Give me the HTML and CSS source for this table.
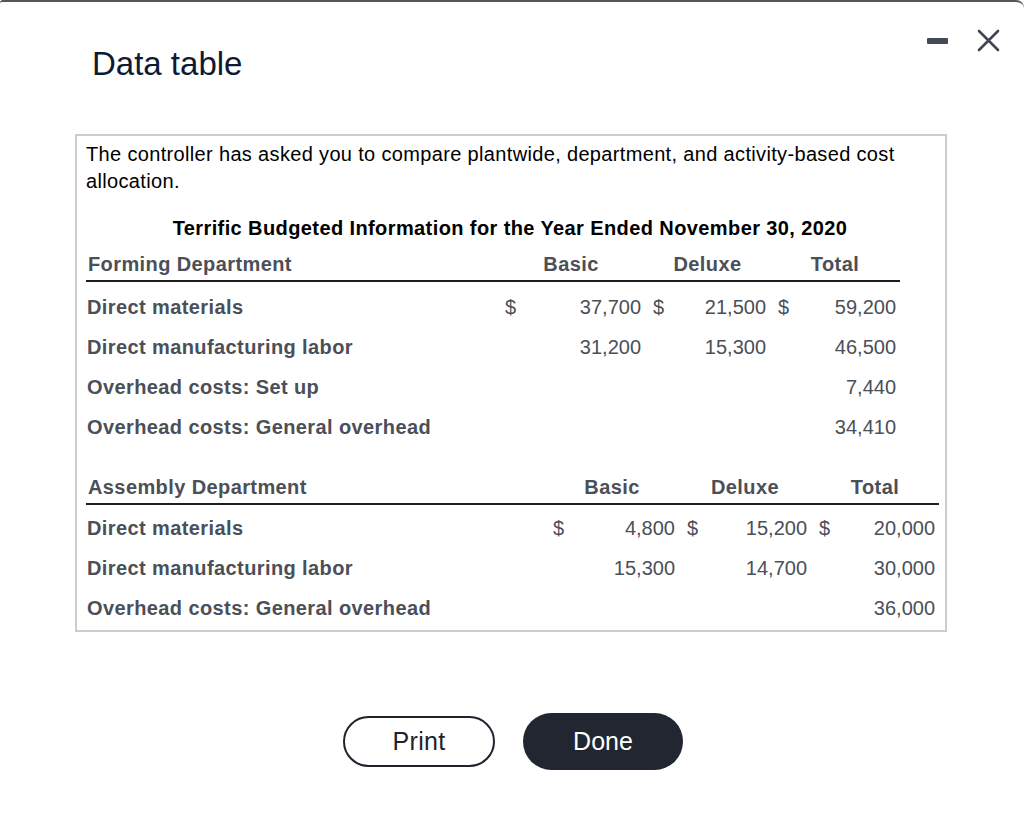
FILE: index.html
```html
<!DOCTYPE html>
<html lang="en">
<head>
<meta charset="utf-8">
<title>Data table</title>
<link rel="stylesheet" href="styles.css">
</head>
<body>
<div class="dialog">
  <header class="dialog-header">
    <h1 class="dialog-title">Data table</h1>
    <div class="window-controls">
      <span class="ctrl-min" aria-label="Minimize"></span>
      <svg class="ctrl-close" width="23" height="23" viewBox="0 0 23 23" aria-label="Close">
        <path d="M2 2 L21 21 M21 2 L2 21" stroke="#3f4552" stroke-width="2.6" stroke-linecap="round" fill="none"/>
      </svg>
    </div>
  </header>

  <section class="data-box">
    <p class="intro">The controller has asked you to compare plantwide, department, and activity-based cost allocation.</p>
    <h2 class="table-title">Terrific Budgeted Information for the Year Ended November 30, 2020</h2>

    <table class="dtable forming">
      <colgroup>
        <col class="c-label">
        <col class="c-dollar"><col class="c-basic">
        <col class="c-dollar"><col class="c-deluxe">
        <col class="c-dollar"><col class="c-total">
      </colgroup>
      <thead>
        <tr>
          <th class="lbl">Forming Department</th>
          <th colspan="2">Basic</th>
          <th colspan="2">Deluxe</th>
          <th colspan="2">Total</th>
        </tr>
      </thead>
      <tbody>
        <tr><td class="lbl">Direct materials</td><td class="cur">$</td><td class="num">37,700</td><td class="cur">$</td><td class="num">21,500</td><td class="cur">$</td><td class="num">59,200</td></tr>
        <tr><td class="lbl">Direct manufacturing labor</td><td class="cur"></td><td class="num">31,200</td><td class="cur"></td><td class="num">15,300</td><td class="cur"></td><td class="num">46,500</td></tr>
        <tr><td class="lbl">Overhead costs: Set up</td><td class="cur"></td><td class="num"></td><td class="cur"></td><td class="num"></td><td class="cur"></td><td class="num">7,440</td></tr>
        <tr><td class="lbl">Overhead costs: General overhead</td><td class="cur"></td><td class="num"></td><td class="cur"></td><td class="num"></td><td class="cur"></td><td class="num">34,410</td></tr>
      </tbody>
    </table>

    <table class="dtable assembly">
      <colgroup>
        <col class="c-label">
        <col class="c-dollar"><col class="c-basic">
        <col class="c-dollar"><col class="c-deluxe">
        <col class="c-dollar"><col class="c-total">
      </colgroup>
      <thead>
        <tr>
          <th class="lbl">Assembly Department</th>
          <th colspan="2">Basic</th>
          <th colspan="2">Deluxe</th>
          <th colspan="2">Total</th>
        </tr>
      </thead>
      <tbody>
        <tr><td class="lbl">Direct materials</td><td class="cur">$</td><td class="num">4,800</td><td class="cur">$</td><td class="num">15,200</td><td class="cur">$</td><td class="num">20,000</td></tr>
        <tr><td class="lbl">Direct manufacturing labor</td><td class="cur"></td><td class="num">15,300</td><td class="cur"></td><td class="num">14,700</td><td class="cur"></td><td class="num">30,000</td></tr>
        <tr><td class="lbl">Overhead costs: General overhead</td><td class="cur"></td><td class="num"></td><td class="cur"></td><td class="num"></td><td class="cur"></td><td class="num">36,000</td></tr>
      </tbody>
    </table>
  </section>

  <div class="actions">
    <button class="btn btn-outline" type="button">Print</button>
    <button class="btn btn-solid" type="button">Done</button>
  </div>
</div>
</body>
</html>
```

FILE: styles.css
```css
* { box-sizing: border-box; }

html, body {
  margin: 0;
  padding: 0;
  background: #ffffff;
}

body {
  font-family: "Liberation Sans", Arial, Helvetica, sans-serif;
  color: #000;
}

.dialog {
  width: 1024px;
  height: 824px;
  border-top: 2px solid #555555;
  border-top-left-radius: 3px;
  border-top-right-radius: 8px;
  overflow: hidden;
}

.dialog-header {
  display: flex;
  justify-content: space-between;
  align-items: flex-start;
  padding: 0 24px 0 92px;
}

.dialog-title {
  margin: 44px 0 0;
  font-size: 33px;
  line-height: 36px;
  font-weight: 400;
  color: #0e1a33;
}

.window-controls {
  display: flex;
  align-items: center;
  gap: 29px;
  margin-top: 27px;
}

.ctrl-min {
  display: block;
  width: 21px;
  height: 6px;
  background: #444a55;
  border-radius: 1px;
}

.ctrl-close {
  display: block;
}

.data-box {
  margin: 52px 0 0 75px;
  width: 872px;
  border: 2px solid #cccccc;
  padding: 5px 0 2px 9px;
}

.intro {
  margin: 0;
  font-size: 20px;
  line-height: 27px;
  letter-spacing: 0.34px;
  color: #000;
  padding-right: 40px;
}

.table-title {
  margin: 21px 0 0;
  font-size: 20px;
  line-height: 24px;
  letter-spacing: 0.4px;
  font-weight: 700;
  text-align: center;
  color: #000;
  padding-right: 11px;
}

.dtable {
  border-collapse: collapse;
  table-layout: fixed;
  font-size: 20px;
  color: #4b4f58;
}

.dtable th {
  font-weight: 700;
  line-height: 24px;
  letter-spacing: 0.4px;
  padding: 0 0 4px;
  border-bottom: 2px solid #1e1e1e;
  text-align: center;
  white-space: nowrap;
}

.dtable th.lbl { text-align: left; padding-left: 2px; }

.dtable td {
  line-height: 40px;
  padding: 0;
  white-space: nowrap;
}

.dtable tbody tr:first-child td { padding-top: 5px; }
.assembly tbody tr:first-child td { padding-top: 3px; }

.dtable td.lbl { font-weight: 700; padding-left: 1px; letter-spacing: 0.4px; }
.dtable td.cur { text-align: left; padding-left: 8px; }
.dtable td.num { text-align: right; padding-right: 4px; }

.forming { width: 814px; margin-top: 12px; }
.forming .c-label { width: 411px; }
.forming .c-dollar { width: 20px; }
.forming .c-basic { width: 128px; }
.forming .c-deluxe { width: 105px; }
.forming .c-total { width: 110px; }

.assembly { width: 853px; margin-top: 28px; }
.assembly .c-label { width: 459px; }
.assembly .c-dollar { width: 20px; }
.assembly .c-basic { width: 114px; }
.assembly .c-deluxe { width: 112px; }
.assembly .c-total { width: 108px; }

.actions {
  display: flex;
  justify-content: center;
  align-items: center;
  gap: 28px;
  margin-top: 81px;
  padding-left: 2px;
}

.btn {
  font-family: "Liberation Sans", Arial, Helvetica, sans-serif;
  font-size: 25px;
  border-radius: 30px;
  cursor: pointer;
  padding: 0;
}

.btn-outline {
  width: 152px;
  height: 51px;
  background: #ffffff;
  color: #1f232b;
  border: 2px solid #1f232b;
  letter-spacing: 0.3px;
}

.btn-solid {
  width: 160px;
  height: 57px;
  background: #212631;
  color: #ffffff;
  border: none;
}
```
